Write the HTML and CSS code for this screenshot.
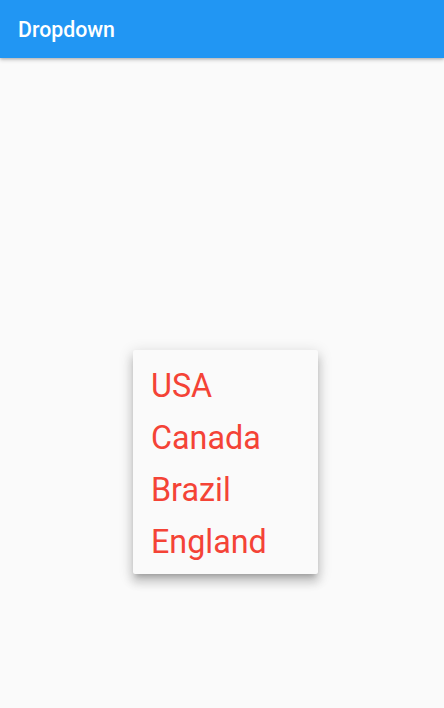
FILE: index.html
```html
<!DOCTYPE html>
<html>
<head>
<meta charset="utf-8">
<link rel="stylesheet" href="styles.css">
</head>
<body>
<header class="appbar"><h1 class="title">Dropdown</h1></header>
<main class="content">
  <ul class="menu">
    <li class="item">USA</li>
    <li class="item">Canada</li>
    <li class="item">Brazil</li>
    <li class="item">England</li>
  </ul>
</main>
</body>
</html>
```
FILE: styles.css
```css
html, body {
  margin: 0;
  padding: 0;
  height: 100%;
}
body {
  background: #fafafa;
  font-family: Roboto, "Noto Sans", sans-serif;
  display: flex;
  flex-direction: column;
}
.appbar {
  height: 58px;
  background: #2196f3;
  display: flex;
  align-items: center;
  padding: 0 18px;
  box-shadow: 0 2px 4px rgba(0,0,0,0.2), 0 1px 2px rgba(0,0,0,0.12);
  position: relative;
  z-index: 1;
}
.title {
  margin: 0;
  color: #fff;
  font-size: 21.3px;
  font-weight: 500;
}
.content {
  flex: 1;
  display: flex;
  flex-direction: column;
  align-items: flex-start;
  padding: 292px 0 0 133px;
}
.menu {
  list-style: none;
  margin: 0;
  padding: 10px 0 6px;
  width: 185px;
  background: #fafafa;
  border-radius: 2px;
  box-shadow: 0 5px 5px -3px rgba(0,0,0,0.2), 0 8px 10px 1px rgba(0,0,0,0.14), 0 3px 14px 2px rgba(0,0,0,0.12);
}
.item {
  height: 52px;
  display: flex;
  align-items: center;
  padding: 0 18px;
  font-size: 32.3px;
  color: #f44336;
}
```
